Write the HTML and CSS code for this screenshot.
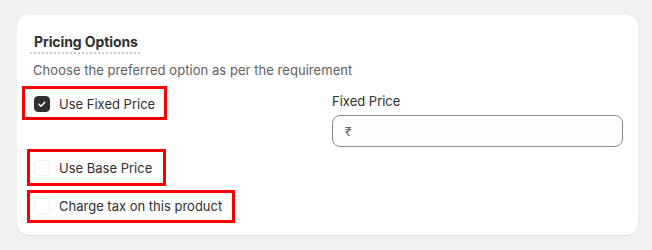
FILE: index.html
```html
<!DOCTYPE html>
<html>
<head>
<meta charset="utf-8">
<link rel="stylesheet" href="styles.css">
</head>
<body>
<div class="card">
  <div class="title"><span class="title-text">Pricing Options</span></div>
  <p class="subtitle">Choose the preferred option as per the requirement</p>
  <div class="grid">
    <div class="options">
      <label class="opt opt-fixed">
        <span class="box checked">
          <svg viewBox="0 0 16 16" width="16" height="16"><path d="M4.6 8.3l2.2 2.2 4.4-4.6" fill="none" stroke="#fff" stroke-width="1.7" stroke-linecap="round" stroke-linejoin="round"/></svg>
        </span>
        <span class="opt-label">Use Fixed Price</span>
      </label>
      <label class="opt opt-base">
        <span class="box"></span>
        <span class="opt-label">Use Base Price</span>
      </label>
      <label class="opt opt-tax">
        <span class="box"></span>
        <span class="opt-label">Charge tax on this product</span>
      </label>
    </div>
    <div class="field">
      <div class="field-label">Fixed Price</div>
      <div class="input"><span class="currency">₹</span></div>
    </div>
  </div>
</div>
</body>
</html>
```

FILE: styles.css
```css
* { box-sizing: border-box; }
html, body { margin: 0; padding: 0; }
body {
  background: #f1f1f1;
  font-family: Inter, "Noto Sans", "DejaVu Sans", sans-serif;
  color: #303030;
  width: 652px;
  height: 250px;
  overflow: hidden;
}
.card {
  margin: 15px 0 0 17px;
  width: 621px;
  height: 220px;
  background: #fff;
  border-radius: 12px;
  box-shadow: 0 1px 0 #dcdcdc;
  padding: 18px 15px 0 16px;
}
.title {
  display: flex;
}
.title-text {
  font-size: 14px;
  font-weight: 650;
  line-height: 18px;
  padding: 0 2px 1px 4px;
  margin-left: -3px;
  border-bottom: 2px dotted #c8ccd4;
  letter-spacing: -0.1px;
}
.subtitle {
  margin: 7px 0 0 0;
  font-size: 13px;
  line-height: 18px;
  color: #616161;
  letter-spacing: 0.05px;
}
.grid {
  display: grid;
  grid-template-columns: 291px 291px;
  column-gap: 8px;
  margin-top: 7px;
}
.options {
  display: flex;
  flex-direction: column;
}
.opt {
  display: flex;
  align-items: center;
  border: 3px solid #ff0000;
  font-size: 13px;
  color: #303030;
}
.opt-fixed {
  margin-left: -11px;
  width: 145px;
  height: 34px;
  padding-left: 9px;
  padding-top: 1px;
}
.opt-base {
  margin-left: -6px;
  margin-top: 29px;
  width: 139px;
  height: 37px;
  padding-left: 4px;
}
.opt-tax {
  margin-left: -6px;
  margin-top: 4px;
  width: 208px;
  height: 33px;
  padding-left: 4px;
  padding-bottom: 2px;
}
.box {
  width: 16px;
  height: 16px;
  border-radius: 4px;
  border: 1px solid #f0f0f0;
  background: #fff;
  flex: none;
  display: flex;
  align-items: center;
  justify-content: center;
}
.box.checked {
  background: #303030;
  border-color: #303030;
}
.box svg { display: block; }
.opt-label {
  margin-left: 9px;
}
.field {
  padding-top: 5px;
}
.field-label {
  font-size: 13px;
  line-height: 20px;
  color: #303030;
}
.input {
  margin-top: 4px;
  height: 32px;
  border: 1px solid #8a8a8a;
  border-radius: 8px;
  background: #fdfdfd;
  display: flex;
  align-items: center;
  padding-left: 12px;
}
.currency {
  font-size: 12px;
  color: #616161;
}
```
